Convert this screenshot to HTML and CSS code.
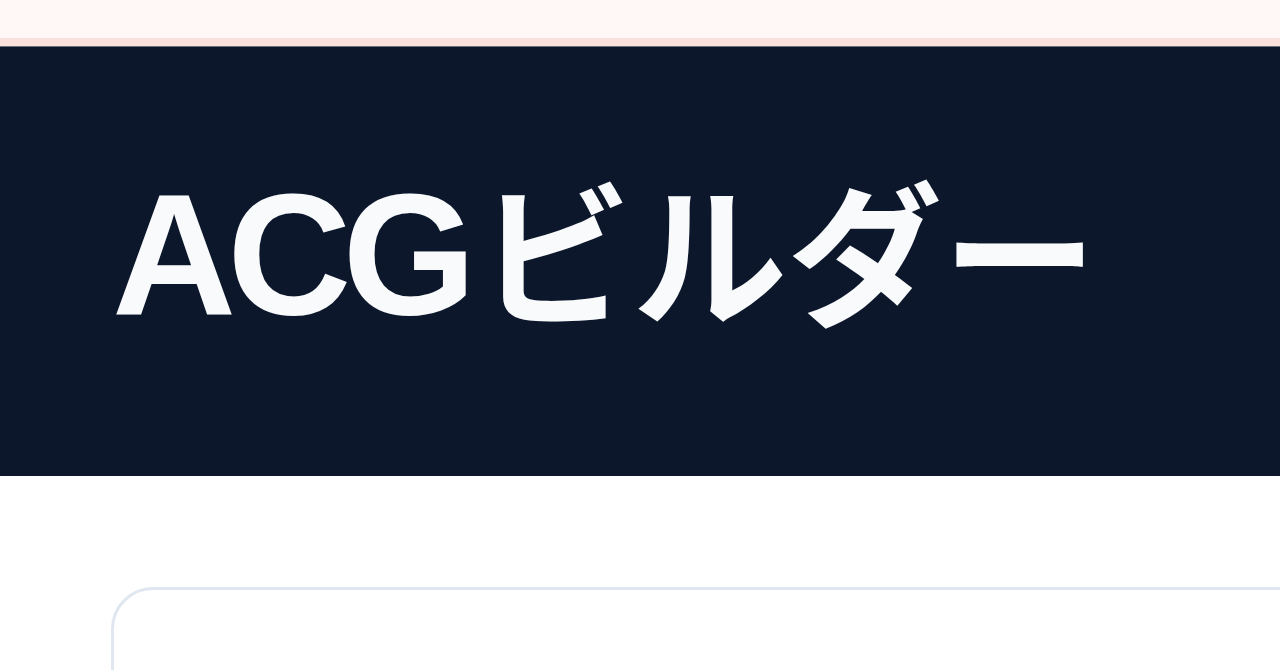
FILE: index.html
```html
<!DOCTYPE html>
<html lang="ja">
<head>
<meta charset="utf-8">
<link rel="stylesheet" href="styles.css">
</head>
<body>
<div class="topbar"></div>
<header class="hero">
  <h1 class="title"><span class="latin">ACG</span><span class="kana">ビルダー</span></h1>
</header>
<main class="content">
  <section class="card"></section>
</main>
</body>
</html>
```
FILE: styles.css
```css
html, body {
  margin: 0;
  padding: 0;
  background: #ffffff;
  overflow: hidden;
}
body {
  font-family: "Liberation Sans", "Noto Sans CJK JP", sans-serif;
}
.topbar {
  height: 38px;
  background: #fff8f6;
  border-bottom: 8px solid #f9e1dd;
  box-shadow: 0 1px 0 #6b6f7a;
}
.hero {
  background: #0c172b;
  height: 429px;
  margin-top: 1px;
  display: flex;
  align-items: center;
  padding-left: 112px;
}
.title {
  margin: 0;
  color: #f8fafc;
  font-size: 172px;
  font-weight: 700;
  line-height: 1;
  position: relative;
  top: -8px;
  white-space: nowrap;
}
.latin {
  letter-spacing: -9px;
}
.kana {
  font-size: 155px;
  letter-spacing: 0;
  margin-left: 10px;
}
.content {
  padding: 111px 0 0 111px;
}
.card {
  height: 400px;
  margin-right: -60px;
  border: 3px solid #e1e7f1;
  border-radius: 42px;
  background: #ffffff;
}
```
